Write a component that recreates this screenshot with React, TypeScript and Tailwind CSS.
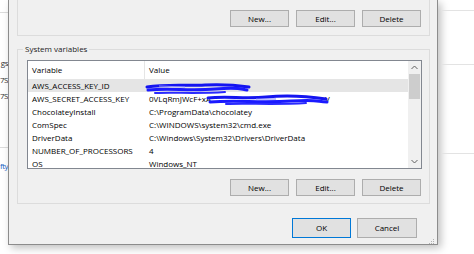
import React from "react";

type Row = { name: string; value: string; mark?: "a" | "b" };

const rows: Row[] = [
  { name: "AWS_ACCESS_KEY_ID", value: "", mark: "a" },
  { name: "AWS_SECRET_ACCESS_KEY", value: "0VLqRmJWcF+xA", mark: "b" },
  { name: "ChocolateyInstall", value: "C:\\ProgramData\\chocolatey" },
  { name: "ComSpec", value: "C:\\WINDOWS\\system32\\cmd.exe" },
  { name: "DriverData", value: "C:\\Windows\\System32\\Drivers\\DriverData" },
  { name: "NUMBER_OF_PROCESSORS", value: "4" },
  { name: "OS", value: "Windows_NT" },
];

function Btn({ children, primary }: { children: React.ReactNode; primary?: boolean }) {
  return (
    <div
      className={
        primary
          ? "flex h-[20px] w-[59px] items-center justify-center border border-[#0078d7] bg-[#e1e1e1]"
          : "flex h-[17px] w-[59px] items-center justify-center border border-[#adadad] bg-[#e1e1e1]"
      }
    >
      {children}
    </div>
  );
}

function Scribble({ kind }: { kind: "a" | "b" }) {
  if (kind === "a") {
    return (
      <svg className="absolute left-[0px] top-[-4px]" width="106" height="15" viewBox="0 0 106 15">
        <path d="M2 5 C20 2 40 4 60 3 S90 3 104 5" stroke="#1414f0" strokeWidth="3" fill="none" strokeLinecap="round" />
        <path d="M3 8 C25 6 45 9 70 7 S95 7 102 8" stroke="#1a1aff" strokeWidth="3" fill="none" strokeLinecap="round" />
        <path d="M10 11 C30 10 50 12 80 10" stroke="#2a2aff" strokeWidth="2" fill="none" strokeLinecap="round" />
        <path d="M14 4 L40 5" stroke="#9090ff" strokeWidth="1" fill="none" />
      </svg>
    );
  }
  return (
    <svg className="absolute left-[61px] top-[-2px]" width="124" height="14" viewBox="0 0 124 14">
      <path d="M2 5 C20 3 40 6 60 4 S100 3 120 6" stroke="#1414f0" strokeWidth="3" fill="none" strokeLinecap="round" />
      <path d="M4 9 C30 7 55 10 85 8 S110 9 121 9" stroke="#1a1aff" strokeWidth="3" fill="none" strokeLinecap="round" />
      <path d="M20 11 C40 10 70 12 100 10" stroke="#2a2aff" strokeWidth="2" fill="none" strokeLinecap="round" />
      <path d="M50 6 L70 6" stroke="#8080ff" strokeWidth="1" fill="none" />
    </svg>
  );
}

export default function App() {
  return (
    <div className="flex h-[254px] w-[474px] overflow-hidden bg-white font-['Open_Sans',sans-serif] text-[8px] leading-none text-black">
      {/* window behind, left edge */}
      <div className="flex w-2 flex-col items-end tracking-[-0.5px]">
        <div className="mt-[12px] h-px w-full bg-[#dcdcdc]" />
        <div className="mt-[46px] text-[#333]">gs</div>
        <div className="mt-[9px] text-[#333]">7S</div>
        <div className="mt-[8px] text-[#333]">7S</div>
        <div className="mt-[47px] h-px w-full bg-[#dcdcdc]" />
        <div className="mt-[14px] text-[#1a62c5]">fty</div>
      </div>

      {/* dialog */}
      <div className="flex h-[245px] w-[430px] flex-col border-x border-b border-[#8c8c8c] bg-[#f0f0f0] shadow-[3px_3px_8px_rgba(0,0,0,0.25)]">
        {/* user variables group (top cut off) */}
        <div className="ml-2 mr-[7px] mt-[-20px] flex h-[56px] shrink-0 flex-col border border-[#dcdcdc]">
          <div className="mr-2 mt-[29px] flex justify-end gap-[7px]">
            <Btn>New...</Btn>
            <Btn>Edit...</Btn>
            <Btn>Delete</Btn>
          </div>
        </div>

        {/* system variables group */}
        <div className="relative ml-2 mr-[7px] mt-[13px] flex h-[155px] shrink-0 flex-col border border-[#dcdcdc]">
          <div className="absolute left-[5px] top-[-5px] bg-[#f0f0f0] px-[2px] text-[#222]">System variables</div>
          <div className="ml-[9px] mr-[7px] mt-[10px] flex h-[109px] border border-[#828790] bg-white">
            <div className="flex flex-1 flex-col overflow-hidden">
              <div className="flex h-[18px] shrink-0 items-center">
                <div className="flex h-full w-[117px] items-center border-r border-[#e5e5e5] pl-[4px]">Variable</div>
                <div className="pl-[4px]">Value</div>
              </div>
              {rows.map((r, i) => (
                <div
                  key={r.name}
                  className={i === 0 ? "flex h-[13px] shrink-0 items-center bg-[#e5e5e5]" : "flex h-[13px] shrink-0 items-center"}
                >
                  <div className="w-[117px] whitespace-nowrap pl-[4px]">{r.name}</div>
                  <div className="relative flex-1 whitespace-nowrap pl-[4px]">
                    {r.value}
                    {r.mark === "b" && <span className="absolute left-[180px] top-0">V</span>}
                    {r.mark && <Scribble kind={r.mark} />}
                  </div>
                </div>
              ))}
            </div>
            {/* scrollbar */}
            <div className="flex w-[13px] flex-col bg-[#f0f0f0]">
              <div className="flex h-[13px] items-center justify-center">
                <svg width="7" height="5" viewBox="0 0 7 5">
                  <path d="M0.5 4 L3.5 1 L6.5 4" stroke="#606060" strokeWidth="1" fill="none" />
                </svg>
              </div>
              <div className="mx-[1px] h-[25px] bg-[#cdcdcd]" />
              <div className="flex-1" />
              <div className="flex h-[13px] items-center justify-center">
                <svg width="7" height="5" viewBox="0 0 7 5">
                  <path d="M0.5 1 L3.5 4 L6.5 1" stroke="#606060" strokeWidth="1" fill="none" />
                </svg>
              </div>
            </div>
          </div>
          <div className="mr-2 mt-[10px] flex justify-end gap-[7px]">
            <Btn>New...</Btn>
            <Btn>Edit...</Btn>
            <Btn>Delete</Btn>
          </div>
        </div>

        {/* OK / Cancel */}
        <div className="mr-[20px] mt-[14px] flex justify-end gap-[6px]">
          <Btn primary>OK</Btn>
          <div className="flex h-[20px] w-[60px] items-center justify-center border border-[#adadad] bg-[#e1e1e1]">Cancel</div>
        </div>
        <div className="mr-[2px] mt-[1px] flex justify-end">
          <svg width="6" height="6" viewBox="0 0 6 6">
            <rect x="4" y="0" width="1" height="1" fill="#b0b0b0" />
            <rect x="2" y="2" width="1" height="1" fill="#b0b0b0" />
            <rect x="4" y="2" width="1" height="1" fill="#b0b0b0" />
            <rect x="0" y="4" width="1" height="1" fill="#b0b0b0" />
            <rect x="2" y="4" width="1" height="1" fill="#b0b0b0" />
            <rect x="4" y="4" width="1" height="1" fill="#b0b0b0" />
          </svg>
        </div>
      </div>

      {/* window behind, right side */}
      <div className="flex flex-1 flex-col pl-[4px]">
        <div className="mt-[10px] h-px bg-[#e3e3e3]" />
        <div className="mt-[53px] h-px bg-[#e3e3e3]" />
        <div className="mt-[88px] h-px bg-[#e3e3e3]" />
      </div>
    </div>
  );
}
